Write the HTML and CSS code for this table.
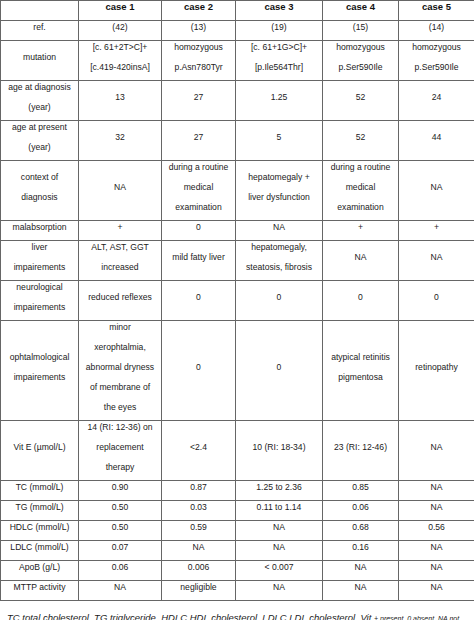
FILE: index.html
```html
<!DOCTYPE html>
<html>
<head>
<meta charset="utf-8">
<link rel="stylesheet" href="styles.css">
</head>
<body>
<table class="t">
<colgroup>
<col class="c0"><col class="c1"><col class="c2"><col class="c3"><col class="c4"><col class="c5">
</colgroup>
<tr class="head"><td><div class="v"></div></td><td><div class="v">case 1</div></td><td><div class="v">case 2</div></td><td><div class="v">case 3</div></td><td><div class="v">case 4</div></td><td><div class="v">case 5</div></td></tr>
<tr><td><div class="v">ref.</div></td><td><div class="v">(42)</div></td><td><div class="v">(13)</div></td><td><div class="v">(19)</div></td><td><div class="v">(15)</div></td><td><div class="v">(14)</div></td></tr>
<tr><td><div class="v">mutation</div></td><td><div class="v">[c. 61+2T&gt;C]+<br>[c.419-420insA]</div></td><td><div class="v">homozygous<br>p.Asn780Tyr</div></td><td><div class="v">[c. 61+1G&gt;C]+<br>[p.Ile564Thr]</div></td><td><div class="v">homozygous<br>p.Ser590Ile</div></td><td><div class="v">homozygous<br>p.Ser590Ile</div></td></tr>
<tr><td><div class="v">age at diagnosis<br>(year)</div></td><td><div class="v">13</div></td><td><div class="v">27</div></td><td><div class="v">1.25</div></td><td><div class="v">52</div></td><td><div class="v">24</div></td></tr>
<tr><td><div class="v">age at present<br>(year)</div></td><td><div class="v">32</div></td><td><div class="v">27</div></td><td><div class="v">5</div></td><td><div class="v">52</div></td><td><div class="v">44</div></td></tr>
<tr><td><div class="v">context of<br>diagnosis</div></td><td><div class="v">NA</div></td><td><div class="v">during a routine<br>medical<br>examination</div></td><td><div class="v">hepatomegaly +<br>liver dysfunction</div></td><td><div class="v">during a routine<br>medical<br>examination</div></td><td><div class="v">NA</div></td></tr>
<tr><td><div class="v">malabsorption</div></td><td><div class="v">+</div></td><td><div class="v">0</div></td><td><div class="v">NA</div></td><td><div class="v">+</div></td><td><div class="v">+</div></td></tr>
<tr><td><div class="v">liver<br>impairements</div></td><td><div class="v">ALT, AST, GGT<br>increased</div></td><td><div class="v">mild fatty liver</div></td><td><div class="v">hepatomegaly,<br>steatosis, fibrosis</div></td><td><div class="v">NA</div></td><td><div class="v">NA</div></td></tr>
<tr><td><div class="v">neurological<br>impairements</div></td><td><div class="v">reduced reflexes</div></td><td><div class="v">0</div></td><td><div class="v">0</div></td><td><div class="v">0</div></td><td><div class="v">0</div></td></tr>
<tr><td><div class="v">ophtalmological<br>impairements</div></td><td><div class="v">minor<br>xerophtalmia,<br>abnormal dryness<br>of membrane of<br>the eyes</div></td><td><div class="v">0</div></td><td><div class="v">0</div></td><td><div class="v">atypical retinitis<br>pigmentosa</div></td><td><div class="v">retinopathy</div></td></tr>
<tr><td><div class="v">Vit E (µmol/L)</div></td><td><div class="v">14 (RI: 12-36) on<br>replacement<br>therapy</div></td><td><div class="v">&lt;2.4</div></td><td><div class="v">10 (RI: 18-34)</div></td><td><div class="v">23 (RI: 12-46)</div></td><td><div class="v">NA</div></td></tr>
<tr><td><div class="v">TC (mmol/L)</div></td><td><div class="v">0.90</div></td><td><div class="v">0.87</div></td><td><div class="v">1.25 to 2.36</div></td><td><div class="v">0.85</div></td><td><div class="v">NA</div></td></tr>
<tr><td><div class="v">TG (mmol/L)</div></td><td><div class="v">0.50</div></td><td><div class="v">0.03</div></td><td><div class="v">0.11 to 1.14</div></td><td><div class="v">0.06</div></td><td><div class="v">NA</div></td></tr>
<tr><td><div class="v">HDLC (mmol/L)</div></td><td><div class="v">0.50</div></td><td><div class="v">0.59</div></td><td><div class="v">NA</div></td><td><div class="v">0.68</div></td><td><div class="v">0.56</div></td></tr>
<tr><td><div class="v">LDLC (mmol/L)</div></td><td><div class="v">0.07</div></td><td><div class="v">NA</div></td><td><div class="v">NA</div></td><td><div class="v">0.16</div></td><td><div class="v">NA</div></td></tr>
<tr><td><div class="v">ApoB (g/L)</div></td><td><div class="v">0.06</div></td><td><div class="v">0.006</div></td><td><div class="v">&lt; 0.007</div></td><td><div class="v">NA</div></td><td><div class="v">NA</div></td></tr>
<tr><td><div class="v">MTTP activity</div></td><td><div class="v">NA</div></td><td><div class="v">negligible</div></td><td><div class="v">NA</div></td><td><div class="v">NA</div></td><td><div class="v">NA</div></td></tr>
</table>
<p class="note">TC total cholesterol, TG triglyceride, HDLC HDL cholesterol, LDLC LDL cholesterol, Vit <span class="small">+ present, 0 absent, NA not</span></p>
</body>
</html>
```
FILE: styles.css
```css
html, body {
  margin: 0;
  padding: 0;
  background: #fff;
}
body {
  font-family: "Liberation Sans", Arial, sans-serif;
  color: #222;
  width: 474px;
  height: 620px;
  overflow: hidden;
}
.t {
  border-collapse: collapse;
  table-layout: fixed;
  width: 474px;
  font-size: 8.6px;
}
.c0 { width: 78px; }
.c1 { width: 83px; }
.c2 { width: 74px; }
.c3 { width: 87px; }
.c4 { width: 76px; }
.c5 { width: 76px; }
.t td {
  border: 1px solid #666;
  padding: 0 1px;
  text-align: center;
  vertical-align: middle;
  line-height: 20px;
  white-space: nowrap;
  overflow: hidden;
}
.v {
  margin: -4px 0 3px;
}
.head td {
  font-weight: bold;
  font-size: 9.5px;
  color: #111;
}
.note {
  margin: 11px 0 0 7px;
  font-style: italic;
  font-size: 9.5px;
  line-height: 12px;
  white-space: nowrap;
  color: #222;
}
.small {
  font-size: 7px;
}
```
